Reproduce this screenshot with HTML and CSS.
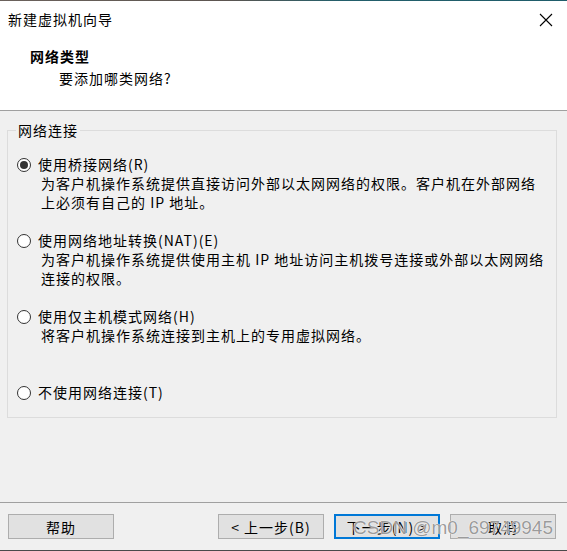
FILE: index.html
```html
<!DOCTYPE html>
<html lang="zh-CN">
<head>
    <meta charset="UTF-8">
    <title>新建虚拟机向导</title>
    <link rel="stylesheet" href="styles.css">
</head>
<body>
    <div class="window">
        <div class="top-edge"></div>
        <div class="header">
            <div class="titlebar">
                <span class="title">新建虚拟机向导</span>
                <svg class="close" width="14" height="14" viewBox="0 0 14 14">
                    <path d="M1 1 L13 13 M13 1 L1 13" stroke="#000" stroke-width="1.1" fill="none"/>
                </svg>
            </div>
            <div class="heading">
                <div class="heading-title">网络类型</div>
                <div class="heading-sub">要添加哪类网络?</div>
            </div>
        </div>

        <div class="content">
            <fieldset class="group">
                <legend>网络连接</legend>
                <div class="option">
                    <div class="option-label"><span class="radio checked"></span>使用桥接网络(R)</div>
                    <div class="option-desc">为客户机操作系统提供直接访问外部以太网网络的权限。客户机在外部网络<br>上必须有自己的 IP 地址。</div>
                </div>
                <div class="option">
                    <div class="option-label"><span class="radio"></span>使用网络地址转换(NAT)(E)</div>
                    <div class="option-desc">为客户机操作系统提供使用主机 IP 地址访问主机拨号连接或外部以太网网络<br>连接的权限。</div>
                </div>
                <div class="option">
                    <div class="option-label"><span class="radio"></span>使用仅主机模式网络(H)</div>
                    <div class="option-desc">将客户机操作系统连接到主机上的专用虚拟网络。</div>
                </div>
                <div class="option last">
                    <div class="option-label"><span class="radio"></span>不使用网络连接(T)</div>
                </div>
            </fieldset>
        </div>

        <div class="footer">
            <button class="btn">帮助</button>
            <div class="nav">
                <button class="btn">&lt; 上一步(B)</button>
                <button class="btn default">下一步(N) &gt;</button>
                <button class="btn">取消</button>
            </div>
        </div>
        <div class="bottom-edge"></div>

        <div class="watermark">CSDN @m0_69749945</div>
    </div>
</body>
</html>
```

FILE: styles.css
```css
body {
    margin: 0;
    font-family: "Noto Sans CJK SC", "Microsoft YaHei", sans-serif;
    font-size: 14px;
    letter-spacing: 1px;
    color: #000;
    background-color: #f0f0f0;
}

.window {
    position: relative;
    width: 567px;
    height: 551px;
    display: flex;
    flex-direction: column;
    overflow: hidden;
}

.top-edge {
    height: 1px;
    background: linear-gradient(to right, #6b625c 0%, #5c5550 40%, #235f6b 60%, #1f5c6a 100%);
}

.bottom-edge {
    height: 1px;
    background-color: #4a4a4a;
}

.header {
    height: 110px;
    box-sizing: border-box;
    background-color: #fff;
    border-bottom: 1px solid #a0a0a0;
}

.titlebar {
    height: 37px;
    display: flex;
    align-items: center;
    justify-content: space-between;
    padding: 0 14px 0 8px;
}

.title {
    line-height: 19px;
}

.heading {
    padding: 8px 0 0 30px;
    line-height: 20px;
}

.heading-title {
    font-weight: bold;
}

.heading-sub {
    margin-top: 2px;
    padding-left: 29px;
}

.content {
    height: 391px;
    padding-top: 10px;
    box-sizing: border-box;
}

.group {
    margin: 0 10px 0 7px;
    padding: 15px 0 15px 9px;
    border: 1px solid #dcdcdc;
}

.group legend {
    margin-left: -1px;
    padding: 0 2px;
    line-height: 19px;
}

.option {
    height: 76px;
    line-height: 19px;
}

.option.last {
    height: 19px;
}

.option-label {
    display: flex;
    align-items: center;
    white-space: nowrap;
}

.option-desc {
    padding-left: 24px;
    white-space: nowrap;
}

.radio {
    flex: none;
    width: 14px;
    height: 14px;
    box-sizing: border-box;
    border: 1px solid #333;
    border-radius: 50%;
    background-color: #fff;
    margin-right: 7px;
    display: flex;
    align-items: center;
    justify-content: center;
}

.radio.checked::after {
    content: "";
    width: 8px;
    height: 8px;
    border-radius: 50%;
    background-color: #333;
}

.footer {
    height: 48px;
    box-sizing: border-box;
    border-top: 1px solid #a0a0a0;
    padding: 11px 11px 0 8px;
    display: flex;
    align-items: flex-start;
    justify-content: space-between;
}

.nav {
    display: flex;
    gap: 10px;
}

.btn {
    width: 106px;
    height: 25px;
    padding: 0;
    font-family: inherit;
    font-size: 14px;
    letter-spacing: 1px;
    color: #000;
    background-color: #e1e1e1;
    border: 1px solid #adadad;
    border-radius: 0;
}

.btn.default {
    border: 2px solid #0078d7;
}

/* watermark from the original screenshot, drawn over the buttons */
.watermark {
    position: absolute;
    right: 14px;
    bottom: 12px;
    font-family: "Liberation Sans", Arial, sans-serif;
    font-size: 19px;
    letter-spacing: 0;
    color: rgba(110, 110, 110, 0.7);
    text-shadow: 0 0 1px #fff, 0 0 1px #fff;
}
```
